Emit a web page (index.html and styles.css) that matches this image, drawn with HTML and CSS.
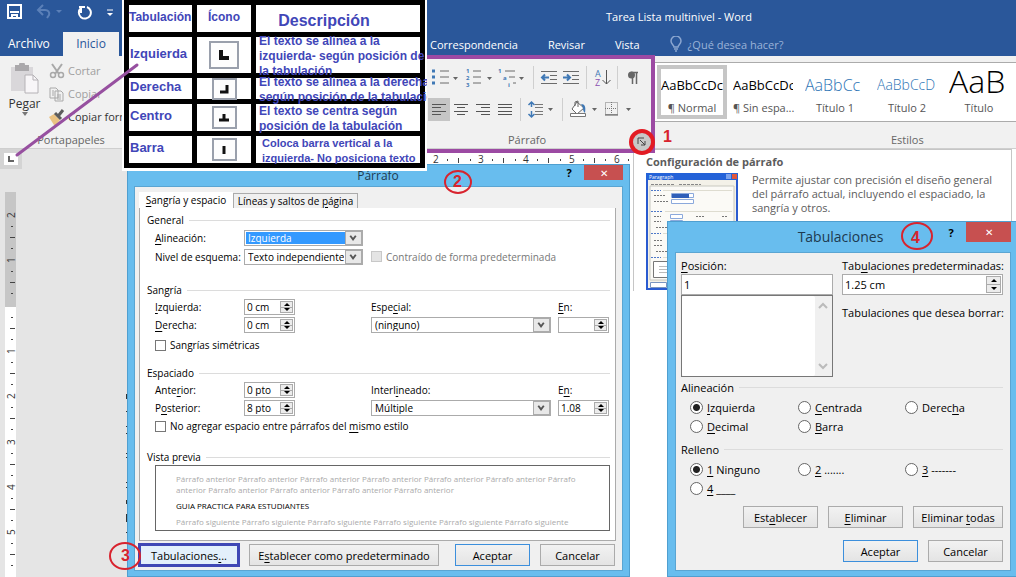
FILE: index.html
```html
<!DOCTYPE html>
<html lang="es">
    <head>
        <meta charset="utf-8">
        <meta name="viewport" content="width=device-width, initial-scale=1.0">
        <title>Tarea Lista multinivel - Word</title>
        <link rel="stylesheet" href="styles.css">
    </head>
    <body>
        <div class="word">
            <header class="titlebar">
                <div class="quick">
                    <svg width="16" height="16" viewBox="0 0 16 16"><path d="M1 1h13v13H1z" fill="none" stroke="#fff" stroke-width="2"/><path d="M3 8h9M5 11h5v3H5z" stroke="#fff" stroke-width="2" fill="none"/></svg>
                    <svg width="28" height="16" viewBox="0 0 28 16"><path d="M7 1L2 6l5 5M2 6h7c3 0 5 2 4 5l-2 3" fill="none" stroke="#5b80b8" stroke-width="2"/><path d="M20 6h6l-3 3z" fill="#5b80b8"/></svg>
                    <svg width="16" height="16" viewBox="0 0 16 16"><path d="M10 3a6 6 0 1 1-6 1" fill="none" stroke="#fff" stroke-width="2"/><path d="M4 9V3M2 3h6" fill="none" stroke="#fff" stroke-width="2"/></svg>
                    <svg width="8" height="16" viewBox="0 0 8 16"><path d="M1 6h6" stroke="#fff"/><path d="M1 9h6l-3 3z" fill="#fff"/></svg>
                </div>
                <div class="doc-name">Tarea Lista multinivel - Word</div>
            </header>
            <nav class="tabs">
                <div class="tabs-left">
                    <a href="#" class="file">Archivo</a>
                    <a href="#" class="active">Inicio</a>
                </div>
                <a href="#">Correspondencia</a>
                <a href="#">Revisar</a>
                <a href="#">Vista</a>
                <a href="#" class="tell">
                    <svg width="12" height="16" viewBox="0 0 12 16"><path d="M4 11c0-2-3-3-3-6a5 5 0 0 1 10 0c0 3-3 4-3 6zM4 13h4M5 15h2" fill="none" stroke="#8ba6d0" stroke-width="1.5"/></svg>
                    ¿Qué desea hacer?
                </a>
            </nav>
            <section class="ribbon">
                <div class="group clipboard">
                    <div class="tools">
                        <button class="paste">
                            <svg width="30" height="32" viewBox="0 0 30 32"><path d="M1 4h22v24H1z" fill="#d9d7da"/><path d="M5 2h4a3 3 0 0 1 6 0h4v6H5z" fill="#aaa8ab"/><path d="M15 12h8l5 5v13H15z" fill="#f8f6f8" stroke="#b5b2b6"/><path d="M23 12v5h5" fill="none" stroke="#b5b2b6"/></svg>
                            Pegar
                            <svg width="6" height="4" viewBox="0 0 6 4"><path d="M0 0h6L3 4z" fill="#777"/></svg>
                        </button>
                        <div class="edit">
                            <button class="off"><svg width="16" height="16" viewBox="0 0 16 16"><path d="M3 1l7 10M13 1L6 11" stroke="#a9a9a9" stroke-width="2" fill="none"/><circle cx="4" cy="12" r="2.5" fill="none" stroke="#a9a9a9" stroke-width="1.5"/><circle cx="12" cy="12" r="2.5" fill="none" stroke="#a9a9a9" stroke-width="1.5"/></svg>Cortar</button>
                            <button class="off"><svg width="16" height="16" viewBox="0 0 16 16"><path d="M1 2h6l2 2v8H1zM6 5h6l2 2v8H6z" fill="#f1f1f1" stroke="#a9a9a9"/><path d="M3 5h2M3 7h2M3 9h2M8 9h4M8 11h4M8 13h4" stroke="#a9a9a9"/></svg>Copiar</button>
                            <button><svg width="16" height="16" viewBox="0 0 16 16"><path d="M0 8l5-3 6 6-4 5H5z" fill="#eac282"/><path d="M6 4l6 6M10 6l4-5" stroke="#5c5c5c" stroke-width="3"/></svg>Copiar formato</button>
                        </div>
                    </div>
                    <div class="group-name">Portapapeles</div>
                </div>
                <div class="group paragraph">
                    <div class="strip">
                        <svg width="226" height="66" viewBox="427 64 226 66" fill="none">
                            <path d="M440 71h9M440 77h9M440 83h9M473 71h8M473 77h8M473 83h8M505 71h10M509 77h6M513 83h3" stroke="#6b6b6b"/>
                            <path d="M432 71h3M432 77h3M432 83h3" stroke="#3f78b5" stroke-width="3"/>
                            <g class="tiny"><text x="466" y="73">1</text><text x="466" y="80">2</text><text x="466" y="87">3</text><text x="498" y="73">1</text><text x="503" y="80">a</text><text x="508" y="87">i</text></g>
                            <path d="M453 77h5l-2.500 3zM487 77h5l-2.500 3zM519 77h5l-2.500 3zM548 108h5l-2.500 3zM592 108h5l-2.500 3zM626 108h5l-2.500 3z" fill="#666"/>
                            <path d="M533.500 66v23M586.500 66v23M617.500 66v23M520.500 98v23M562.500 98v23" stroke="#cfcfcf"/>
                            <path d="M541 71.500h16M550 75.500h7M550 79.500h7M541 83.500h16M563 71.500h16M572 75.500h7M572 79.500h7M563 83.500h16" stroke="#6b6b6b"/>
                            <path d="M549 77.500h-7m3-3l-3 3 3 3M563 77.500h7m-3-3l3 3-3 3" stroke="#3f78b5" stroke-width="2"/>
                            <text x="595" y="77" class="az">A</text><text x="595" y="86" class="az z">Z</text>
                            <path d="M606.500 70v14m-4-4l4 4 4-4" stroke="#555"/>
                            <path d="M632.500 72v12M636.500 72v12M631 72.500h7" stroke="#666" stroke-width="1.500"/><circle cx="631.500" cy="75" r="3.500" fill="#666"/>
                            <path d="M428 98h22v23h-22z" fill="#c5c5c5"/>
                            <path d="M432 104.500h14M432 107.500h9M432 111.500h14M432 114.500h9M454 104.500h14M457 107.500h8M454 111.500h14M457 114.500h8M476 104.500h14M481 107.500h9M476 111.500h14M481 114.500h9M498 104.500h14M498 107.500h14M498 111.500h14M498 114.500h14" stroke="#555"/>
                            <path d="M535 104.500h8M535 107.500h8M535 111.500h8M535 114.500h8" stroke="#777"/>
                            <path d="M531.500 102v5m-3-2l3-3 3 3M531.500 111v5m-3-2l3 3 3-3" stroke="#3f78b5" stroke-width="1.500"/>
                            <path d="M577 102l7 6-7 6-5-5z" fill="#fff" stroke="#666"/><path d="M575 106v-4l3-1v6" stroke="#666"/><path d="M581 104c4 0 5 3 4 9-3-3-1-5-4-9z" fill="#3f78b5"/><path d="M570.500 113.500h15v3h-15z" fill="#fff" stroke="#777"/>
                            <path d="M605.500 102.500h12v12h-12zM611.500 102v12M605 108.500h12" stroke="#777" stroke-dasharray="1 1"/><path d="M605 115h13" stroke="#555"/>
                        </svg>
                    </div>
                    <div class="group-name">Párrafo</div>
                </div>
                <div class="group styles">
                    <div class="gallery">
                        <button class="style selected"><span class="sample">AaBbCcDc</span>¶ Normal</button>
                        <button class="style"><span class="sample">AaBbCcDc</span>¶ Sin espa...</button>
                        <button class="style"><span class="sample h1">AaBbCc</span>Título 1</button>
                        <button class="style"><span class="sample h2">AaBbCcD</span>Título 2</button>
                        <button class="style"><span class="sample big">AaB</span>Título</button>
                    </div>
                    <div class="group-name">Estilos</div>
                </div>
            </section>
            <main class="workspace">
                <div class="side">
                    <button class="tab-type" aria-label="Tabulación izquierda"><svg width="8" height="8" viewBox="0 0 8 8"><path d="M2 1v5h5" fill="none" stroke="#666" stroke-width="2"/></svg></button>
                    <svg class="vruler" width="127" height="385" viewBox="0 192 127 385">
                        <path d="M5 192h11v115H5z" fill="#c6c6c6"/><path d="M5 307h11v270H5z" fill="#fff"/>
                        <path d="M10 237.500h5M10 282.500h5M10 328.500h5M10 373.500h5M10 418.500h5M10 464.500h5M10 509.500h5M10 554.500h5" stroke="#444"/>
                        <path d="M11 226.500h2M11 248.500h2M11 271.500h2M11 293.500h2M11 317.500h2M11 339.500h2M11 362.500h2M11 384.500h2M11 407.500h2M11 429.500h2M11 453.500h2M11 475.500h2M11 498.500h2M11 520.500h2M11 543.500h2M11 565.500h2" stroke="#444"/>
                        <g class="num">
                            <text transform="translate(15 218) rotate(-90)">2</text>
                            <text transform="translate(15 263) rotate(-90)">1</text>
                            <text transform="translate(15 354) rotate(-90)">1</text>
                            <text transform="translate(15 399) rotate(-90)">2</text>
                            <text transform="translate(15 445) rotate(-90)">3</text>
                            <text transform="translate(15 490) rotate(-90)">4</text>
                            <text transform="translate(15 535) rotate(-90)">5</text>
                        </g>
                        <path d="M126.500 394v5M126.500 411v1M126.500 426v1M126.500 433v1M126.500 453v1M126.500 457v1M126.500 482v1M126.500 487v1M126.500 500v4M126.500 514v8M126.500 532v1" stroke="#333"/>
                    </svg>
                </div>
                <div class="page">
                    <svg class="hruler" width="506" height="16" viewBox="127 149 506 16">
                        <g class="num"><text x="433" y="163">2</text><text x="478" y="163">3</text><text x="523" y="163">4</text><text x="569" y="163">5</text><text x="614" y="163">6</text></g>
                        <path d="M447.500 159v2M470.500 159v2M492.500 159v2M515.500 159v2M537.500 159v2M560.500 159v2M583.500 159v2M605.500 159v2M628.500 159v2M458.500 158v5M503.500 158v5M548.500 158v5M594.500 158v5" stroke="#444"/>
                    </svg>
                </div>
            </main>
        </div>

        <!-- screen tip -->
        <aside class="tip">
            <h3>Configuración de párrafo</h3>
            <div class="tip-body">
                <svg width="92" height="117" viewBox="0 0 92 117">
                    <path d="M1 1h90v115H1z" fill="#f3f1e8" stroke="#2a5bd0" stroke-width="2"/>
                    <path d="M0 0h92v7H0z" fill="#2462d8"/><path d="M86 1h5v5h-5z" fill="#e0563c"/><path d="M80 1h5v5h-5z" fill="#7ba2ec"/>
                    <text x="3" y="6" class="mini">Paragraph</text>
                    <path d="M4 13h84v94H4z" fill="#fbfaf6" stroke="#c8c8c0"/>
                    <path d="M5 11.500h24M33 11.500h22" stroke="#888" stroke-dasharray="3 1"/>
                    <path d="M5 17.500h10M5 38.500h12M5 60.500h10M5 84.500h10" stroke="#4f79c8" stroke-dasharray="2 1"/>
                    <path d="M17 17.500h69M19 38.500h67M17 60.500h69M17 84.500h69" stroke="#dedcd0"/>
                    <path d="M8 22.500h12M8 28.500h14M8 43.500h7M8 48.500h7M50 43.500h9M76 43.500h5M8 67.500h8M8 72.500h8M10 54.500h14M10 78.500h14" stroke="#777" stroke-dasharray="2 1"/>
                    <path d="M25.500 20.500h22v4h-22zM25.500 26.500h22v4h-22zM24.500 41.500h12v4h-12zM24.500 47.500h12v4h-12z" fill="#fff" stroke="#8ba9dc"/>
                    <path d="M26 21h17v4H26z" fill="#2f5fb8"/>
                    <path d="M7.500 88.500h77v16h-77z" fill="#fff" stroke="#777"/><path d="M13 93.500h60M13 96.500h60M13 99.500h60" stroke="#bbb"/>
                    <path d="M4.500 109.500h16v5h-16z" fill="#fff" stroke="#7a95c0"/>
                </svg>
                <p>Permite ajustar con precisión el diseño general del párrafo actual, incluyendo el espaciado, la sangría y otros.</p>
            </div>
        </aside>

        <!-- Párrafo -->
        <form class="dialog para">
            <div class="caption">
                <span class="caption-text">Párrafo</span>
                <button type="button" class="help">?</button>
                <button type="button" class="close">✕</button>
            </div>
            <div class="client">
                <div class="dlg-tabs">
                    <button type="button" class="on"><u>S</u>angría y espacio</button>
                    <button type="button">Líneas y saltos de <u>p</u>ágina</button>
                </div>
                <div class="panel">
                    <div class="legend">General</div>
                    <div class="rows tall">
                        <label for="align"><u>A</u>lineación:</label>
                        <span class="combo short"><select id="align" class="marked"><option>Izquierda</option></select><svg width="15" height="13" viewBox="0 0 15 13"><path d="M4 4l3 4 3-4" fill="none" stroke="#555" stroke-width="2"/></svg></span>
                        <span></span><span></span>
                        <label for="level">Nivel de esquema:</label>
                        <span class="combo short"><select id="level"><option>Texto independiente</option></select><svg width="15" height="13" viewBox="0 0 15 13"><path d="M4 4l3 4 3-4" fill="none" stroke="#555" stroke-width="2"/></svg></span>
                        <label class="check muted"><input type="checkbox" disabled>Contraído de forma predeterminada</label>
                    </div>
                    <div class="legend second">Sangría</div>
                    <div class="rows">
                        <label for="left"><u>I</u>zquierda:</label>
                        <span class="spin"><input id="left" type="text" value="0 cm"><span class="arrows"><button type="button" class="up"></button><button type="button" class="down"></button></span></span>
                        <label for="special">Espe<u>c</u>ial:</label>
                        <label for="by"><u>E</u>n:</label>
                        <label for="right"><u>D</u>erecha:</label>
                        <span class="spin"><input id="right" type="text" value="0 cm"><span class="arrows"><button type="button" class="up"></button><button type="button" class="down"></button></span></span>
                        <span class="combo"><select id="special"><option>(ninguno)</option></select><svg width="15" height="13" viewBox="0 0 15 13"><path d="M4 4l3 4 3-4" fill="none" stroke="#555" stroke-width="2"/></svg></span>
                        <span class="spin"><input id="by" type="text" value=""><span class="arrows"><button type="button" class="up"></button><button type="button" class="down"></button></span></span>
                    </div>
                    <label class="check alone"><input type="checkbox">Sangrías simétricas</label>
                    <div class="legend third">Espaciado</div>
                    <div class="rows">
                        <label for="before">Ante<u>r</u>ior:</label>
                        <span class="spin"><input id="before" type="text" value="0 pto"><span class="arrows"><button type="button" class="up"></button><button type="button" class="down"></button></span></span>
                        <label for="leading">Interl<u>i</u>neado:</label>
                        <label for="at">E<u>n</u>:</label>
                        <label for="after">P<u>o</u>sterior:</label>
                        <span class="spin"><input id="after" type="text" value="8 pto"><span class="arrows"><button type="button" class="up"></button><button type="button" class="down"></button></span></span>
                        <span class="combo"><select id="leading"><option>Múltiple</option></select><svg width="15" height="13" viewBox="0 0 15 13"><path d="M4 4l3 4 3-4" fill="none" stroke="#555" stroke-width="2"/></svg></span>
                        <span class="spin"><input id="at" type="text" value="1.08"><span class="arrows"><button type="button" class="up"></button><button type="button" class="down"></button></span></span>
                    </div>
                    <label class="check"><input type="checkbox"><span>No agregar espacio entre párrafos del <u>m</u>ismo estilo</span></label>
                    <div class="legend fourth">Vista previa</div>
                    <div class="preview">
                        <p>Párrafo anterior Párrafo anterior Párrafo anterior Párrafo anterior Párrafo anterior Párrafo anterior Párrafo<br>anterior Párrafo anterior Párrafo anterior Párrafo anterior Párrafo anterior</p>
                        <p class="now">GUIA PRACTICA PARA ESTUDIANTES</p>
                        <p>Párrafo siguiente Párrafo siguiente Párrafo siguiente Párrafo siguiente Párrafo siguiente Párrafo siguiente</p>
                    </div>
                </div>
                <div class="dlg-buttons">
                    <button type="button" class="btn ringed">Tabulaciones<u>.</u>..</button>
                    <button type="button" class="btn wide">E<u>s</u>tablecer como predeterminado</button>
                    <button type="button" class="btn default">Aceptar</button>
                    <button type="button" class="btn">Cancelar</button>
                </div>
            </div>
        </form>

        <!-- Tabulaciones -->
        <form class="dialog tabsdlg">
            <div class="caption">
                <span class="caption-text">Tabulaciones</span>
                <button type="button" class="help">?</button>
                <button type="button" class="close">✕</button>
            </div>
            <div class="client">
                <div class="cols">
                    <div>
                        <label for="pos"><u>P</u>osición:</label>
                        <input id="pos" class="pos" type="text" value="1">
                        <div class="list">
                            <select size="4" aria-label="Posiciones"></select>
                            <svg width="17" height="79" viewBox="0 0 17 79"><path d="M0 0h17v79H0z" fill="#f0f0f0"/><path d="M4 12l4-4 4 4M4 68l4 4 4-4" fill="none" stroke="#bbb" stroke-width="2"/></svg>
                        </div>
                    </div>
                    <div>
                        <label for="deftab">Tab<u>u</u>laciones predeterminadas:</label>
                        <span class="spin"><input id="deftab" type="text" value="1.25 cm"><span class="arrows"><button type="button" class="up"></button><button type="button" class="down"></button></span></span>
                        <p>Tabulaciones que desea borrar:</p>
                    </div>
                </div>
                <div class="legend">Alineación</div>
                <div class="radios">
                    <label><input type="radio" name="al" checked><span><u>I</u>zquierda</span></label>
                    <label><input type="radio" name="al"><span><u>C</u>entrada</span></label>
                    <label><input type="radio" name="al"><span>Derec<u>h</u>a</span></label>
                    <label><input type="radio" name="al"><span><u>D</u>ecimal</span></label>
                    <label><input type="radio" name="al"><span><u>B</u>arra</span></label>
                </div>
                <div class="legend">Relleno</div>
                <div class="radios">
                    <label><input type="radio" name="fill" checked><span><u>1</u> Ninguno</span></label>
                    <label><input type="radio" name="fill"><span><u>2</u> .......</span></label>
                    <label><input type="radio" name="fill"><span><u>3</u> -------</span></label>
                    <label><input type="radio" name="fill"><span><u>4</u> ____</span></label>
                </div>
                <div class="dlg-buttons">
                    <button type="button" class="btn">Est<u>a</u>blecer</button>
                    <button type="button" class="btn"><u>E</u>liminar</button>
                    <button type="button" class="btn wide">Eliminar <u>t</u>odas</button>
                </div>
                <div class="dlg-buttons last">
                    <button type="button" class="btn default">Aceptar</button>
                    <button type="button" class="btn">Cancelar</button>
                </div>
            </div>
        </form>

        <!-- tab stops table -->
        <div class="guide">
            <table>
                <tr class="r0"><th class="c1"><div>Tabulación</div></th><th class="c2"><div>Ícono</div></th><th class="c3 head"><div>Descripción</div></th></tr>
                <tr class="r1"><td class="c1"><div>Izquierda</div></td><td class="c2"><div><svg width="30" height="28" viewBox="0 0 30 28"><path d="M1 1h28v26H1z" fill="#fdfdfd" stroke="#9aa0ac" stroke-width="2"/><path d="M12 9v8h8" fill="none" stroke="#111" stroke-width="4"/></svg></div></td><td class="c3"><div>El texto se alinea a la<br>izquierda- según posición de<br>la tabulación</div></td></tr>
                <tr class="r2"><td class="c1"><div>Derecha</div></td><td class="c2"><div><svg width="25" height="22" viewBox="0 0 25 22"><path d="M1 1h23v20H1z" fill="#fdfdfd" stroke="#9aa0ac" stroke-width="2"/><path d="M15 7v7H8" fill="none" stroke="#111" stroke-width="3"/></svg></div></td><td class="c3"><div>El texto se alinea a la derecha<br>según posición de la tabulación</div></td></tr>
                <tr class="r3"><td class="c1"><div>Centro</div></td><td class="c2"><div><svg width="25" height="23" viewBox="0 0 25 23"><path d="M1 1h23v21H1z" fill="#fdfdfd" stroke="#9aa0ac" stroke-width="2"/><path d="M12 8v6M7 14h10" fill="none" stroke="#111" stroke-width="3"/></svg></div></td><td class="c3"><div>El texto se centra según<br>posición de la tabulación</div></td></tr>
                <tr class="r3"><td class="c1"><div>Barra</div></td><td class="c2"><div><svg width="25" height="23" viewBox="0 0 25 23"><path d="M1 1h23v21H1z" fill="#fdfdfd" stroke="#9aa0ac" stroke-width="2"/><path d="M12 8v8" fill="none" stroke="#111" stroke-width="3"/></svg></div></td><td class="c3 last"><div>&nbsp;Coloca barra vertical a la<br>&nbsp;izquierda- No posiciona texto</div></td></tr>
            </table>
        </div>

        <!-- marks drawn over the windows -->
        <svg class="marks" width="1016" height="577" viewBox="0 0 1016 577" fill="none">
            <path d="M427 57h226v94H427" stroke="#9c4aa3" stroke-width="4"/>
            <path d="M17 155L137 65" stroke="#9750a0" stroke-width="3" stroke-linecap="round"/>
            <circle cx="642" cy="142" r="11" fill="#c8c8c8" stroke="#e31b23" stroke-width="4"/>
            <path d="M638 144v-6h6M640 140l5 5M645 141v4h-4" stroke="#444"/>
            <g stroke="#d8232e" stroke-width="2">
                <ellipse cx="458" cy="182" rx="13" ry="11"/>
                <ellipse cx="125" cy="556" rx="15" ry="13"/>
                <ellipse cx="917" cy="236" rx="15" ry="13"/>
            </g>
            <text x="663" y="142">1</text>
            <text x="453" y="187">2</text>
            <text x="121" y="561">3</text>
            <text x="911" y="243">4</text>
        </svg>
    </body>
</html>
```
FILE: styles.css
```css
*{
    box-sizing: border-box;
}
html, body{
    margin: 0px;
    padding: 0px;
    height: 100%;
    overflow: hidden;
    background-color: #e5e5e5;
}
body, button, input, select{
    font-family: 'Open Sans', 'Noto Sans', sans-serif;
    font-size: 11px;
    color: black;
}
button{
    padding: 0px;
    border: none;
    background: none;
    white-space: nowrap;
}
input, select{
    min-width: 0px;
    margin: 0px;
    border: none;
    outline: none;
}
p, h3{
    margin: 0px;
}
svg{
    display: block;
    flex: none;
}
u{
    text-underline-offset: 2px;
}

/* word window */
.word{
    display: flex;
    flex-direction: column;
    min-height: 100%;
}
.titlebar{
    display: flex;
    align-items: center;
    height: 32px;
    background-color: #2a579a;
    color: white;
}
.quick{
    display: flex;
    gap: 13px;
    width: 606px;
    height: 24px;
    padding-left: 7px;
}
.tabs{
    display: flex;
    align-items: center;
    height: 24px;
    background-color: #2a579a;
}
.tabs a{
    color: white;
    text-decoration: none;
    margin-right: 30px;
}
.tabs-left{
    display: flex;
    width: 430px;
    font-size: 12px;
}
.tabs-left a{
    line-height: 24px;
    margin-right: 0px;
}
.tabs-left .file{
    width: 63px;
    padding-left: 8px;
}
.tabs-left .active{
    width: 56px;
    text-align: center;
    background-color: #f1f1f1;
    color: #2a579a;
}
.tabs .tell{
    display: flex;
    align-items: center;
    gap: 6px;
    margin-right: 0px;
    color: #9bb3d8;
}
.ribbon{
    display: flex;
    height: 93px;
    background-color: #f1f1f1;
    border-bottom: 1px solid #cfcfcf;
}
.group{
    display: flex;
    flex-direction: column;
    justify-content: space-between;
}
.group-name{
    text-align: center;
    line-height: 16px;
    color: #666;
}
.clipboard{
    width: 427px;
}
.clipboard .group-name{
    width: 142px;
}
.tools{
    display: flex;
    padding-top: 3px;
}
.paste{
    display: flex;
    flex-direction: column;
    align-items: center;
    width: 49px;
    padding-top: 4px;
    font-size: 12px;
    color: #333;
}
.edit button{
    display: flex;
    align-items: center;
    gap: 3px;
    height: 23px;
    color: #333;
}
.edit .off{
    color: #a0a0a0;
}
.paragraph{
    width: 228px;
    padding-top: 8px;
}
.paragraph .group-name{
    width: 200px;
}
.tiny{
    font-size: 6px;
    font-weight: bold;
    fill: #3f78b5;
}
.az{
    font-size: 9px;
    fill: #3f78b5;
}
.az.z{
    fill: #8a4fb0;
}
.styles{
    flex: 1;
    min-width: 0px;
    padding-top: 6px;
    overflow: hidden;
}
.styles .group-name{
    padding-left: 252px;
    text-align: left;
    padding-left: 236px;
}
.gallery{
    display: flex;
    gap: 2px;
    height: 60px;
    padding: 2px;
    overflow: hidden;
    background-color: white;
    border-top: 1px solid #ababab;
    border-bottom: 1px solid #ababab;
}
.style{
    flex: none;
    width: 70px;
    height: 54px;
    border: 4px solid white;
    border-right-width: 6px;
    color: #555;
}
.style.selected{
    border: 4px solid #c6c6c6;
}
.sample{
    display: block;
    height: 30px;
    overflow: hidden;
    line-height: 30px;
    text-align: left;
    font-size: 13px;
    color: black;
}
.sample.h1, .sample.h2{
    font-size: 16px;
    font-weight: 300;
    color: #2e74b5;
}
.sample.h2{
    font-size: 14px;
}
.sample.big{
    font-size: 32px;
    font-weight: 300;
    line-height: 22px;
}
.workspace{
    display: flex;
    flex: 1;
}
.side{
    width: 127px;
}
.tab-type{
    display: flex;
    align-items: center;
    justify-content: center;
    width: 22px;
    height: 20px;
    border: 4px solid #d4d4d4;
    background-color: white;
}
.vruler{
    margin-top: 23px;
}
.num{
    font-size: 10px;
    fill: #333;
}
.page{
    flex: 1;
    background-color: white;
}

/* screen tip */
.tip{
    position: absolute;
    left: 633px;
    top: 149px;
    width: 379px;
    height: 142px;
    padding: 4px 12px;
    background-color: white;
    border: 1px solid #c6c6c6;
    border-bottom: none;
    color: #5c5c5c;
}
.tip h3{
    font-size: 11px;
    line-height: 16px;
}
.tip-body{
    display: flex;
    gap: 14px;
    padding-top: 3px;
}
.tip p{
    line-height: 14px;
}
.mini{
    font-size: 5px;
    fill: white;
}

/* dialogs */
.dialog{
    position: absolute;
    background-color: #68bdee;
    border: 1px solid #4f9fd0;
}
.caption{
    display: flex;
    align-items: flex-start;
}
.caption-text{
    flex: 1;
    text-align: center;
    color: #1d3a50;
}
.help{
    width: 30px;
    font-weight: bold;
    line-height: 16px;
}
.close{
    background-color: #c75050;
    color: white;
    font-size: 10px;
}
.client{
    background-color: #f0f0f0;
    border: 1px solid #5aa5d2;
}
.legend{
    display: flex;
    align-items: center;
    gap: 5px;
    height: 16px;
}
.legend:after{
    content: '';
    flex: 1;
    height: 1px;
    background-color: #dcdcdc;
}
.combo, .spin{
    display: flex;
    height: 16px;
    padding: 1px;
    background-color: white;
    border: 1px solid #ababab;
}
.combo select{
    flex: 1;
    appearance: none;
    height: 12px;
    line-height: 12px;
    padding: 0px 2px;
    background-color: white;
}
.combo svg{
    height: 12px;
    background-color: #e8e8e8;
    outline: 1px solid #ababab;
}
.combo .marked{
    background-color: #3399ff;
    color: white;
}
.spin input{
    flex: 1;
    padding: 0px 1px;
}
.arrows{
    display: flex;
    flex-direction: column;
    width: 13px;
    gap: 1px;
    background-color: #ababab;
    border: 1px solid #ababab;
}
.arrows button{
    display: flex;
    flex: 1;
    align-items: center;
    justify-content: center;
    background-color: #ececec;
}
.arrows button:after{
    content: '';
    border: 3px solid transparent;
    border-top-width: 0px;
    border-bottom: 3px solid black;
}
.arrows .down:after{
    border-bottom-width: 0px;
    border-top: 3px solid black;
}
.btn{
    height: 22px;
    min-width: 75px;
    border: 1px solid #ababab;
    background: linear-gradient(#f2f2f2, #e4e4e4);
}
.btn.default{
    border-color: #3c8fdc;
}
.para{
    left: 127px;
    top: 164px;
    bottom: 0px;
    width: 503px;
    padding: 0px 6px 6px 6px;
}
.para .caption{
    height: 21px;
    line-height: 21px;
}
.para .caption-text{
    padding-left: 68px;
    font-size: 12px;
}
.para .close{
    width: 39px;
    height: 15px;
}
.para .client{
    height: 385px;
    padding: 5px 6px 0px 4px;
}
.para .client, .para input, .para select, .dlg-tabs button{
    font-size: 10px;
}
.dlg-tabs{
    display: flex;
    align-items: flex-end;
}
.dlg-tabs button{
    width: 125px;
    height: 15px;
    line-height: 13px;
    border: 1px solid #ababab;
    border-bottom: none;
}
.dlg-tabs .on{
    width: 94px;
    height: 16px;
    background-color: white;
    border-color: white;
}
.panel{
    padding: 4px 5px 9px 7px;
    background-color: white;
    border: 1px solid #ababab;
    border-top: none;
}
.rows{
    display: grid;
    grid-template-columns: 89px 127px 187px 52px;
    grid-auto-rows: 18px;
    align-items: center;
    padding-left: 8px;
}
.rows.tall{
    grid-auto-rows: 19px;
}
.rows .combo{
    width: 180px;
}
.rows .combo.short{
    width: 119px;
}
.rows .spin{
    width: 51px;
}
.check{
    display: flex;
    align-items: center;
    gap: 4px;
    height: 18px;
    padding-left: 8px;
    white-space: nowrap;
}
.rows .check{
    padding-left: 0px;
}
.check.muted{
    color: #777;
}
.check input{
    appearance: none;
    width: 11px;
    height: 11px;
    background-color: white;
    border: 1px solid #777;
}
.check.muted input{
    background-color: #e4e4e4;
    border-color: #c8c8c8;
}
.check.alone{
    margin-top: 2px;
}
.second{
    margin-top: 16px;
}
.third{
    margin-top: 11px;
}
.fourth{
    margin-top: 14px;
}
.preview{
    height: 66px;
    margin-left: 8px;
    padding: 7px 20px;
    border: 1px solid #666;
    overflow: hidden;
    white-space: nowrap;
    font-size: 8px;
    line-height: 11px;
    color: #aaa;
}
.preview .now{
    margin: 5px 0px;
    color: black;
}
.dlg-buttons{
    display: flex;
    gap: 10px;
}
.para .dlg-buttons{
    padding-top: 3px;
}
.para .wide{
    width: 190px;
    margin-right: 6px;
}
.para .ringed{
    width: 100px;
    background: #e3f0fb;
    outline: 3px solid #3f48b5;
    outline-offset: -2px;
}
.tabsdlg{
    left: 667px;
    top: 221px;
    bottom: 0px;
    width: 349px;
    padding: 0px 5px 6px 7px;
    border-right: none;
}
.tabsdlg .caption{
    height: 30px;
}
.tabsdlg .caption-text{
    padding-left: 70px;
    font-size: 14px;
    line-height: 30px;
}
.tabsdlg .help{
    line-height: 22px;
}
.tabsdlg .close{
    width: 45px;
    height: 20px;
}
.tabsdlg .client{
    height: 319px;
    padding: 4px 7px 0px 5px;
}
.cols{
    display: grid;
    grid-template-columns: 152px 161px;
    gap: 9px;
    height: 121px;
}
.cols label{
    display: block;
    line-height: 17px;
    white-space: nowrap;
}
.pos{
    display: block;
    width: 100%;
    height: 21px;
    padding: 0px 2px;
    border: 1px solid #ababab;
}
.list{
    display: flex;
    height: 82px;
    border: 1px solid #777;
}
.list select{
    flex: 1;
    appearance: none;
    background-color: white;
}
.tabsdlg .spin{
    height: 21px;
}
.tabsdlg .arrows{
    width: 15px;
}
.cols p{
    margin-top: 10px;
    white-space: nowrap;
}
.tabsdlg .legend{
    margin-top: 1px;
}
.radios{
    display: grid;
    grid-template-columns: 108px 107px 98px;
    grid-auto-rows: 19px;
    margin-top: 3px;
    padding-left: 9px;
}
.radios + .legend{
    margin-top: 5px;
}
.radios label{
    display: flex;
    align-items: center;
    gap: 4px;
}
.radios input{
    appearance: none;
    width: 13px;
    height: 13px;
    border: 1px solid #666;
    border-radius: 50%;
    background-color: white;
}
.radios input:checked{
    background: radial-gradient(circle, #222 3px, white 4px);
}
.tabsdlg .dlg-buttons{
    justify-content: flex-end;
    margin-top: 8px;
}
.tabsdlg .dlg-buttons.last{
    margin-top: 12px;
}
.tabsdlg .wide{
    width: 90px;
}

/* table of tab stops */
.guide{
    position: absolute;
    left: 122px;
    top: 0px;
    width: 305px;
    height: 171px;
    padding-left: 2px;
    background-color: white;
    overflow: hidden;
}
.guide table{
    border-spacing: 5px;
    background-color: black;
    font-family: 'Liberation Sans', Arial, sans-serif;
    font-size: 13px;
    font-weight: bold;
    color: #4146b8;
    white-space: nowrap;
}
.guide td, .guide th{
    padding: 0px;
    background-color: white;
    text-align: left;
}
.guide td div, .guide th div{
    display: flex;
    align-items: center;
}
.guide .c1 div{
    width: 63px;
    padding-left: 1px;
    padding-bottom: 4px;
}
.guide .c2 div{
    width: 54px;
    justify-content: center;
}
.guide .c3 div{
    width: 164px;
    padding-left: 3px;
    padding-top: 2px;
    font-size: 12px;
    line-height: 15px;
}
.guide th.c1 div, .guide th.c2 div{
    padding: 0px 0px 4px 0px;
    font-size: 12px;
}
.guide .head div{
    justify-content: center;
    padding: 3px 28px 0px 0px;
    font-size: 16px;
}
.guide .last div{
    font-size: 11px;
}
.r0 div{
    height: 27px;
}
.r1 div{
    height: 36px;
}
.r2 div{
    height: 21px;
}
.r3 div{
    height: 27px;
}
.marks{
    position: absolute;
    left: 0px;
    top: 0px;
    pointer-events: none;
}
.marks text{
    font-family: 'Liberation Sans', Arial, sans-serif;
    font-size: 16px;
    font-weight: bold;
    fill: #d8232e;
}
```
